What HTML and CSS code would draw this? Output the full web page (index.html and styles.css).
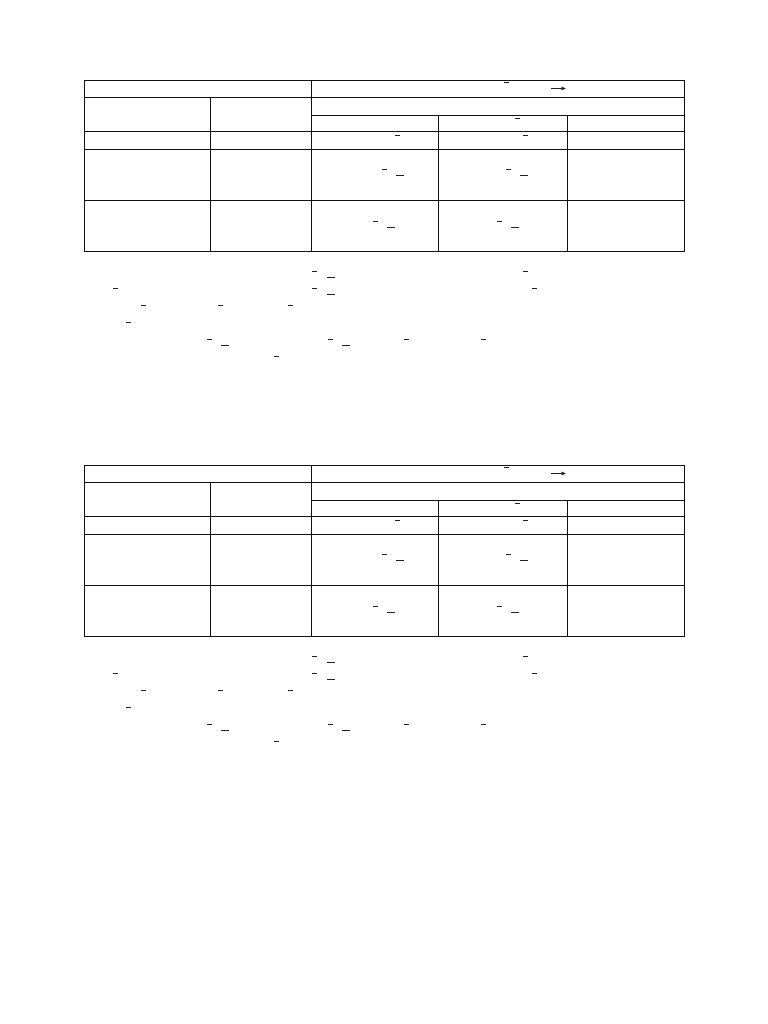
FILE: index.html
```html
<!DOCTYPE html>
<html>
<head>
<meta charset="utf-8">
<link rel="stylesheet" href="styles.css">
</head>
<body>
<div class="sheet">

  <section class="block">
    <table class="grid">
      <colgroup>
        <col class="c1"><col class="c2"><col class="c3"><col class="c4"><col class="c5">
      </colgroup>
      <tr class="r1">
        <td colspan="2"></td>
        <td colspan="3"><div class="marks"><span class="ov h1"></span><svg class="arrow" width="15" height="5" viewBox="0 0 15 5"><line x1="0" y1="2.5" x2="12" y2="2.5" stroke="#222" stroke-width="1"/><polygon points="10.5,0.5 15,2.5 10.5,4.5" fill="#222"/></svg></div></td>
      </tr>
      <tr class="r2">
        <td rowspan="2"></td>
        <td rowspan="2"></td>
        <td colspan="3"></td>
      </tr>
      <tr class="r3">
        <td></td>
        <td><div class="marks"><span class="ov s1"></span></div></td>
        <td></td>
      </tr>
      <tr class="r4">
        <td></td>
        <td></td>
        <td><div class="marks"><span class="ov a1"></span></div></td>
        <td><div class="marks"><span class="ov a2"></span></div></td>
        <td></td>
      </tr>
      <tr class="r5">
        <td></td>
        <td></td>
        <td><div class="marks"><span class="ov b1"></span><span class="ul b2"></span></div></td>
        <td><div class="marks"><span class="ov b3"></span><span class="ul b2"></span></div></td>
        <td></td>
      </tr>
      <tr class="r6">
        <td></td>
        <td></td>
        <td><div class="marks"><span class="ov d1"></span><span class="ul d2"></span></div></td>
        <td><div class="marks"><span class="ov d3"></span><span class="ul d2"></span></div></td>
        <td></td>
      </tr>
    </table>

    <div class="notes">
      <div class="line"><span class="ov" style="margin-left:228px"></span><span class="ul" style="margin-left:10px"></span><span class="ov" style="margin-left:188px"></span></div>
      <div class="line"><span class="ov" style="margin-left:29px"></span><span class="ov" style="margin-left:194px"></span><span class="ul" style="margin-left:10px"></span><span class="ov" style="margin-left:197px"></span></div>
      <div class="line"><span class="ov" style="margin-left:57px"></span><span class="ov" style="margin-left:72px"></span><span class="ov" style="margin-left:65px"></span></div>
      <div class="line"><span class="ov" style="margin-left:42px"></span></div>
      <div class="line"><span class="ov" style="margin-left:123px"></span><span class="ul" style="margin-left:9px"></span><span class="ov" style="margin-left:99px"></span><span class="ul" style="margin-left:9px"></span><span class="ov" style="margin-left:54px"></span><span class="ov" style="margin-left:72px"></span></div>
      <div class="line"><span class="ov" style="margin-left:190px"></span></div>
    </div>
  </section>

  <section class="block second">
    <table class="grid">
      <colgroup>
        <col class="c1"><col class="c2"><col class="c3"><col class="c4"><col class="c5">
      </colgroup>
      <tr class="r1">
        <td colspan="2"></td>
        <td colspan="3"><div class="marks"><span class="ov h1"></span><svg class="arrow" width="15" height="5" viewBox="0 0 15 5"><line x1="0" y1="2.5" x2="12" y2="2.5" stroke="#222" stroke-width="1"/><polygon points="10.5,0.5 15,2.5 10.5,4.5" fill="#222"/></svg></div></td>
      </tr>
      <tr class="r2">
        <td rowspan="2"></td>
        <td rowspan="2"></td>
        <td colspan="3"></td>
      </tr>
      <tr class="r3">
        <td></td>
        <td><div class="marks"><span class="ov s1"></span></div></td>
        <td></td>
      </tr>
      <tr class="r4">
        <td></td>
        <td></td>
        <td><div class="marks"><span class="ov a1"></span></div></td>
        <td><div class="marks"><span class="ov a2"></span></div></td>
        <td></td>
      </tr>
      <tr class="r5">
        <td></td>
        <td></td>
        <td><div class="marks"><span class="ov b1"></span><span class="ul b2"></span></div></td>
        <td><div class="marks"><span class="ov b3"></span><span class="ul b2"></span></div></td>
        <td></td>
      </tr>
      <tr class="r6">
        <td></td>
        <td></td>
        <td><div class="marks"><span class="ov d1"></span><span class="ul d2"></span></div></td>
        <td><div class="marks"><span class="ov d3"></span><span class="ul d2"></span></div></td>
        <td></td>
      </tr>
    </table>

    <div class="notes">
      <div class="line"><span class="ov" style="margin-left:228px"></span><span class="ul" style="margin-left:10px"></span><span class="ov" style="margin-left:188px"></span></div>
      <div class="line"><span class="ov" style="margin-left:29px"></span><span class="ov" style="margin-left:194px"></span><span class="ul" style="margin-left:10px"></span><span class="ov" style="margin-left:197px"></span></div>
      <div class="line"><span class="ov" style="margin-left:57px"></span><span class="ov" style="margin-left:72px"></span><span class="ov" style="margin-left:65px"></span></div>
      <div class="line"><span class="ov" style="margin-left:42px"></span></div>
      <div class="line"><span class="ov" style="margin-left:123px"></span><span class="ul" style="margin-left:9px"></span><span class="ov" style="margin-left:99px"></span><span class="ul" style="margin-left:9px"></span><span class="ov" style="margin-left:54px"></span><span class="ov" style="margin-left:72px"></span></div>
      <div class="line"><span class="ov" style="margin-left:190px"></span></div>
    </div>
  </section>

</div>
</body>
</html>
```

FILE: styles.css
```css
html, body {
  margin: 0;
  padding: 0;
  background: #ffffff;
  font-family: "Liberation Sans", Arial, sans-serif;
}

.sheet {
  width: 768px;
  height: 1024px;
  box-sizing: border-box;
  padding-top: 80px;
  padding-left: 84px;
}

.block.second {
  margin-top: 95px;
}

.grid {
  border-collapse: collapse;
  table-layout: fixed;
  width: 601px;
}

.grid td {
  border: 1px solid #111;
  padding: 0;
  vertical-align: top;
}

.c1 { width: 126px; }
.c2 { width: 101px; }
.c3 { width: 127px; }
.c4 { width: 129px; }
.c5 { width: 117px; }

.r1 { height: 17px; }
.r2 { height: 18px; }
.r3 { height: 16px; }
.r4 { height: 18px; }
.r5 { height: 51px; }
.r6 { height: 51px; }

.marks {
  display: flex;
  align-items: flex-start;
}

.ov {
  display: block;
  flex: none;
  width: 5px;
  height: 1px;
  background: #222;
}

.ul {
  display: block;
  flex: none;
  width: 8px;
  height: 1px;
  background: #222;
}

.arrow {
  display: block;
  flex: none;
  margin-left: 42px;
  margin-top: 5px;
}

.h1 { margin-left: 192px; margin-top: 1px; }
.s1 { margin-left: 76px; margin-top: 2px; }
.a1 { margin-left: 83px; margin-top: 3px; }
.a2 { margin-left: 84px; margin-top: 3px; }
.b1 { margin-left: 70px; margin-top: 19px; }
.b3 { margin-left: 67px; margin-top: 19px; }
.b2 { margin-left: 9px; margin-top: 25px; }
.d1 { margin-left: 61px; margin-top: 20px; }
.d3 { margin-left: 58px; margin-top: 20px; }
.d2 { margin-left: 9px; margin-top: 26px; }

.notes {
  margin-top: 16px;
  margin-left: -84px;
  padding-left: 84px;
}

.line {
  display: flex;
  align-items: flex-start;
  height: 17px;
}

.line .ov { margin-top: 3px; }
.line .ul { margin-top: 9px; }
```
